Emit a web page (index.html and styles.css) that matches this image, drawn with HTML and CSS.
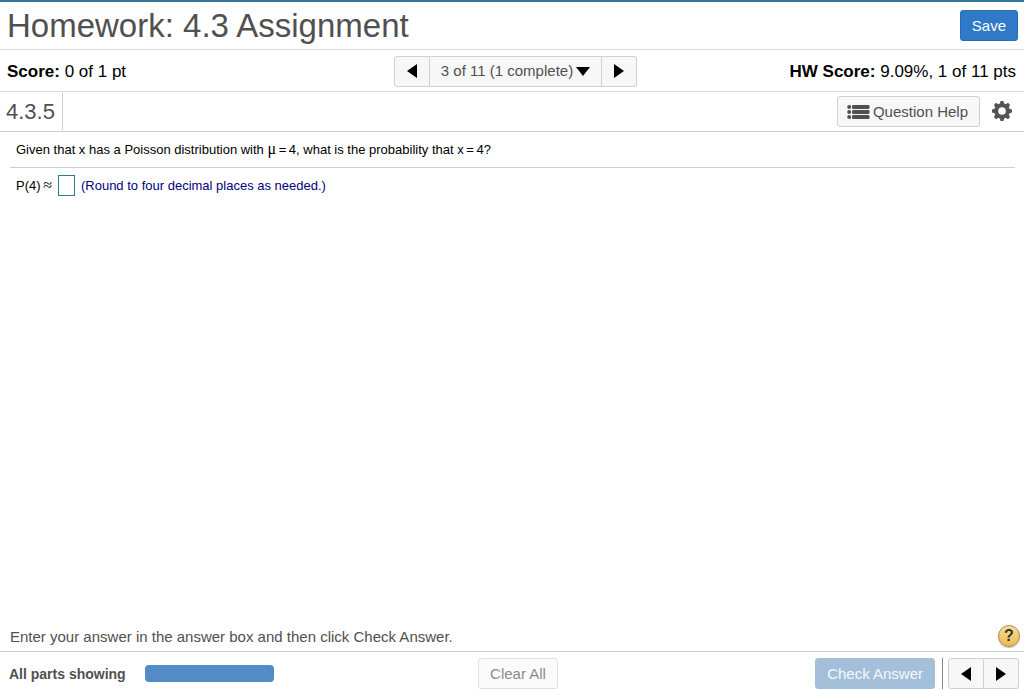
FILE: index.html
```html
<!DOCTYPE html>
<html lang="en">
<head>
<meta charset="utf-8">
<title>Homework: 4.3 Assignment</title>
<link rel="stylesheet" href="styles.css">
</head>
<body>
<header class="title-bar">
  <h1 class="title">Homework: 4.3 Assignment</h1>
  <button class="btn btn-primary" type="button">Save</button>
</header>
<section class="score-bar">
  <p class="score"><strong>Score:</strong> 0 of 1 pt</p>
  <nav class="btn-group" aria-label="Questions">
    <button class="btn btn-arrow" type="button" aria-label="Previous question"><svg width="10" height="14" viewBox="0 0 10 14"><path d="M10 0v14L0 7z"/></svg></button>
    <button class="btn btn-select" type="button">3 of 11 (1 complete)<svg width="14" height="9" viewBox="0 0 14 9"><path d="M0 0h14L7 9z"/></svg></button>
    <button class="btn btn-arrow" type="button" aria-label="Next question"><svg width="10" height="14" viewBox="0 0 10 14"><path d="M0 0v14l10-7z"/></svg></button>
  </nav>
  <p class="score score-total"><strong>HW Score:</strong> 9.09%, 1 of 11 pts</p>
</section>
<section class="question-bar">
  <h2 class="question-number">4.3.5</h2>
  <div class="question-tools">
    <button class="btn btn-help" type="button"><svg width="23" height="16" viewBox="0 0 23 16"><rect x="5" y="1" width="17.500" height="4" rx="1.200"/><rect x="5" y="6" width="17.500" height="4" rx="1.200"/><rect x="5" y="11" width="17.500" height="4" rx="1.200"/><circle cx="2.200" cy="3" r="2"/><circle cx="2.200" cy="8" r="2"/><circle cx="2.200" cy="13" r="2"/></svg>Question Help</button>
    <button class="btn-icon" type="button" aria-label="Settings"><svg width="20" height="20" viewBox="-10 -10 20 20"><circle r="5.800" fill="none" stroke="#555" stroke-width="4"/><g fill="#555"><path id="tooth" d="M-2.400-6.500L-1.500-10h3l.9 3.500z"/><use href="#tooth" transform="rotate(45)"/><use href="#tooth" transform="rotate(90)"/><use href="#tooth" transform="rotate(135)"/><use href="#tooth" transform="rotate(180)"/><use href="#tooth" transform="rotate(225)"/><use href="#tooth" transform="rotate(270)"/><use href="#tooth" transform="rotate(315)"/></g></svg></button>
  </div>
</section>
<main class="question">
  <p class="prompt">Given that x has a Poisson distribution with <span class="symbol">μ</span>&#8201;=&#8201;4, what is the probability that x&#8201;=&#8201;4?</p>
  <div class="answer">
    <label for="answer">P(4)&#8201;<span class="symbol">≈</span></label>
    <input id="answer" class="answer-box" type="text">
    <span class="hint">(Round to four decimal places as needed.)</span>
  </div>
</main>
<div class="message">
  <p class="message-text">Enter your answer in the answer box and then click Check Answer.</p>
  <button class="help-badge" type="button">?</button>
</div>
<footer class="footer">
  <div class="progress"><span class="progress-label">All parts showing</span><span class="progress-bar"></span></div>
  <button class="btn btn-clear" type="button" disabled>Clear All</button>
  <div class="footer-actions">
    <button class="btn btn-check" type="button" disabled>Check Answer</button>
    <nav class="btn-group footer-nav" aria-label="Steps">
      <button class="btn btn-arrow" type="button" aria-label="Previous"><svg width="10" height="14" viewBox="0 0 10 14"><path d="M10 0v14L0 7z"/></svg></button>
      <button class="btn btn-arrow" type="button" aria-label="Next"><svg width="10" height="14" viewBox="0 0 10 14"><path d="M0 0v14l10-7z"/></svg></button>
    </nav>
  </div>
</footer>
</body>
</html>
```

FILE: styles.css
```css
* { box-sizing: border-box; }
body {
  margin: 0;
  min-height: 100vh;
  display: flex;
  flex-direction: column;
  background: #fff;
  color: #000;
  font-family: "Liberation Sans", Arial, sans-serif;
  font-size: 16px;
}
h1, h2, p { margin: 0; font-weight: normal; }
svg { display: block; flex: none; }

.title-bar {
  display: flex;
  justify-content: space-between;
  align-items: center;
  height: 50px;
  padding: 0 6px 0 7px;
  border-top: 2px solid #337796;
  border-bottom: 1px solid #d9dbe5;
}
.title { color: #505050; font-size: 33px; line-height: 40px; }

.btn {
  display: flex;
  align-items: center;
  justify-content: center;
  height: 31px;
  padding: 0 11px;
  border: 1px solid #d0d0d0;
  border-radius: 3px;
  background: #f7f7f7;
  color: #505050;
  font-family: inherit;
  font-size: 15px;
  line-height: 20px;
  white-space: nowrap;
}
.btn-primary { background: #3079c6; border-color: #2a6cb3; color: #fff; }
.btn-group { display: flex; }
.btn-group .btn { border-radius: 0; }
.btn-group .btn + .btn { border-left: 0; }
.btn-group .btn:first-child { border-radius: 3px 0 0 3px; }
.btn-group .btn:last-child { border-radius: 0 3px 3px 0; }
.btn-arrow { width: 36px; padding: 0; fill: #000; }
.btn-group .btn-arrow:last-child { width: 35px; }
.btn-select { gap: 3px; fill: #000; }

.score-bar {
  display: grid;
  grid-template-columns: 1fr auto 1fr;
  align-items: center;
  height: 42px;
  padding: 1px 8px 0 7px;
  border-bottom: 1px solid #d3d6e1;
}
.score { padding-top: 1px; font-size: 17px; line-height: 20px; }
.score-bar .btn-group { margin-left: 8px; }
.score-total { text-align: right; }

.question-bar {
  display: flex;
  justify-content: space-between;
  align-items: center;
  height: 40px;
  border-bottom: 1px solid #c9cdd8;
}
.question-number {
  height: 37px;
  padding: 0 7px 0 6px;
  border-right: 1px solid #c5cbd8;
  color: #505050;
  font-size: 22px;
  line-height: 37px;
}
.question-tools { display: flex; align-items: center; gap: 12px; padding-right: 12px; }
.btn-help { gap: 3px; padding: 0 11px 0 9px; fill: #505050; }
.btn-icon { padding: 0 0 2px; border: 0; background: none; }

.question { flex: 1; padding: 0 9px 0 10px; font-size: 13px; }
.prompt { padding: 8px 6px; border-bottom: 1px solid #c9cdd8; line-height: 19px; }
.symbol { font-family: "Liberation Serif", serif; font-size: 16px; line-height: 16px; }
.answer { display: flex; align-items: center; gap: 6px; padding: 7px 6px; line-height: 18px; }
.answer-box { width: 17px; height: 21px; padding: 0; border: 1px solid #337796; background: #fff; }
.hint { color: #000080; }

.message { display: flex; justify-content: space-between; align-items: center; height: 30px; padding: 0 4px 0 10px; }
.message-text { color: #505050; font-size: 15px; }
.help-badge {
  width: 22px;
  height: 22px;
  padding: 0;
  border: 1px solid #a58d5c;
  border-radius: 50%;
  background: linear-gradient(#fbdf94, #efb94d);
  box-shadow: 0 1px 1px #bbb;
  color: #333;
  font: bold 16px/20px "Liberation Sans", Arial, sans-serif;
}

.footer {
  display: grid;
  grid-template-columns: 1fr auto 1fr;
  align-items: center;
  height: 39px;
  padding: 5px 5px 0 9px;
  border-top: 1px solid #c9cdd8;
}
.progress { display: flex; align-items: center; gap: 19px; }
.progress-label { color: #505050; font-size: 14px; font-weight: bold; }
.progress-bar { width: 129px; height: 17px; border-radius: 4px; background: #528bc5; }
.btn-clear { margin-left: 8px; border-color: #e0e0e0; background: #fbfbfb; color: #8c8c8c; }
.footer-actions { display: flex; justify-content: flex-end; }
.btn-check { border-color: #a4bfda; background: #a4bfda; color: #f5f8fb; }
.footer-nav { margin-left: 7px; padding-left: 5px; border-left: 1px solid #888; }
```
